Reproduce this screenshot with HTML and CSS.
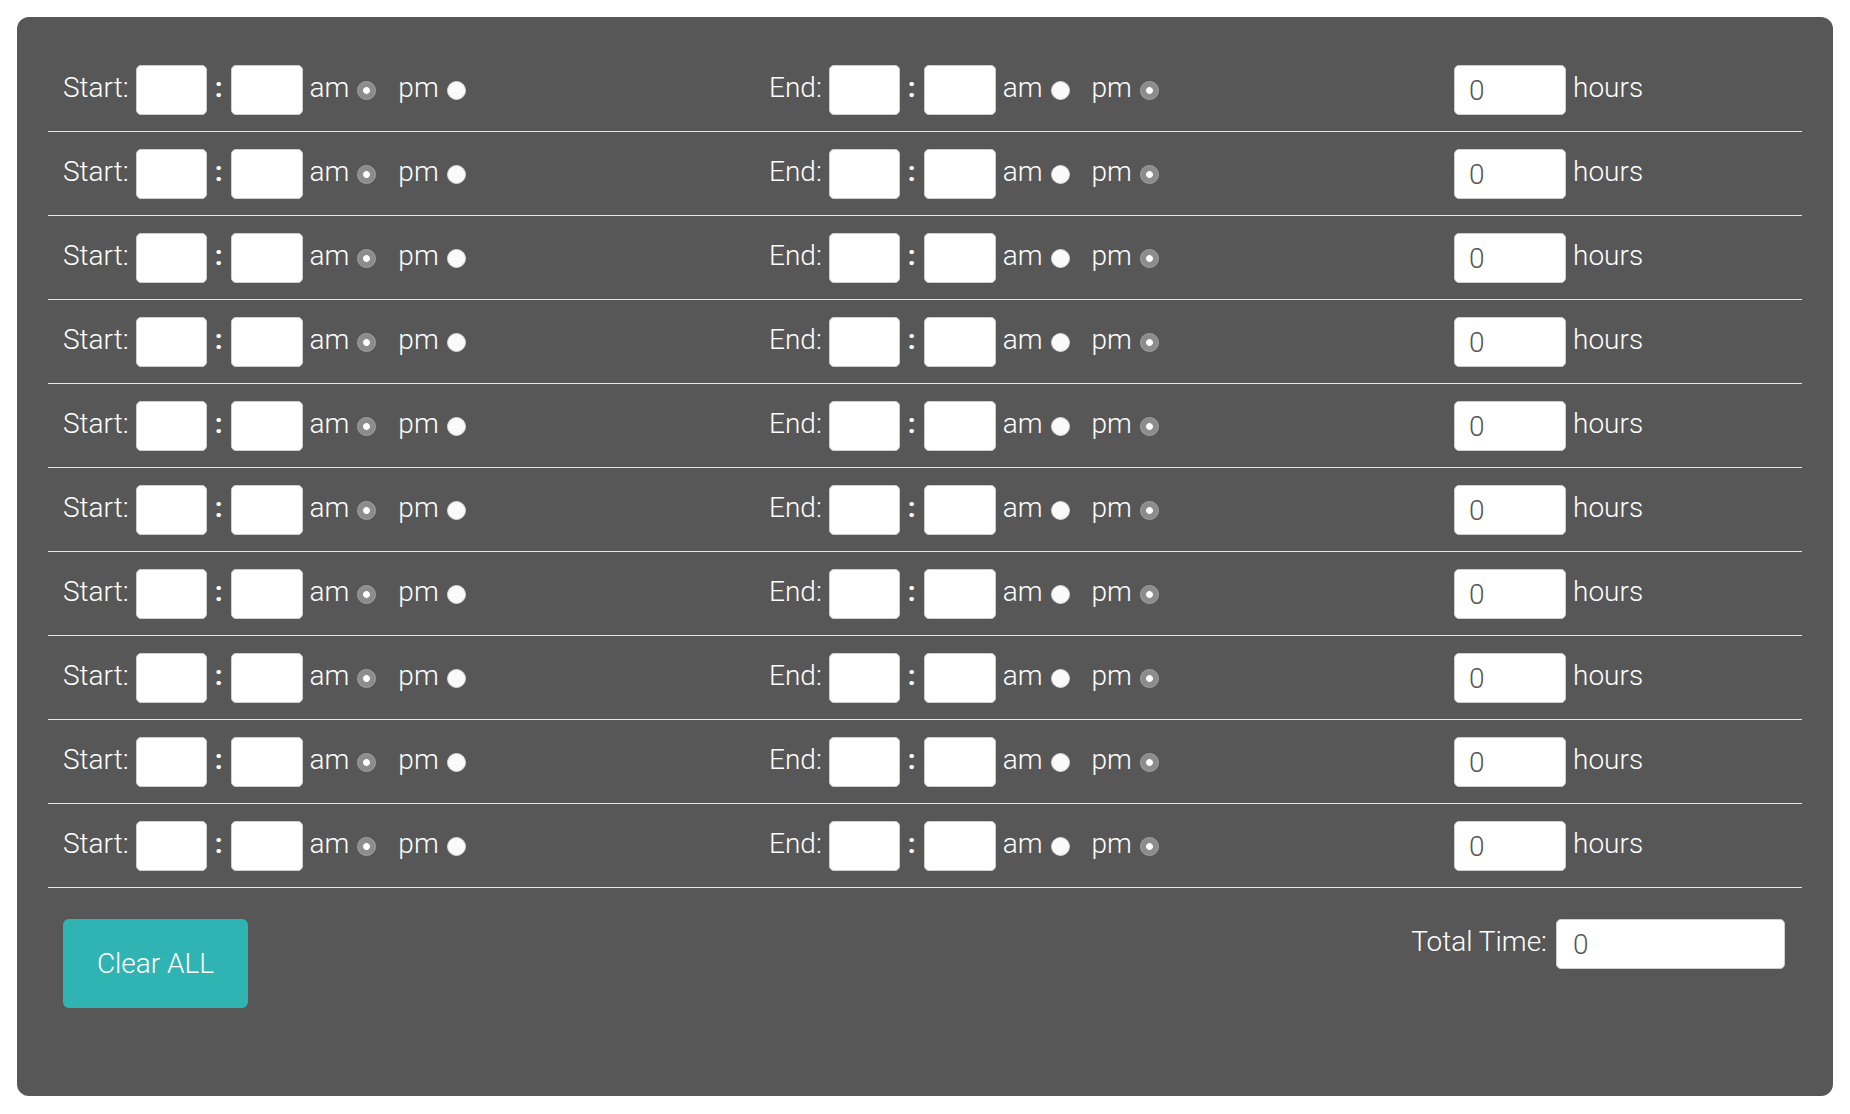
FILE: index.html
```html
<!DOCTYPE html>
<html>
<head>
  <title>Time Card</title>
  <link rel="stylesheet" href="styles.css">
</head>
<body>
  <div class="timecard">
    <div class="row">
      <div class="cell"><span class="lbl">Start:</span><input class="hh" type="text"><span class="colon">:</span><input class="mm" type="text"><span class="lbl">am</span><input type="radio" name="s1" checked><span class="lbl pm">pm</span><input type="radio" name="s1"></div>
      <div class="cell"><span class="lbl">End:</span><input class="hh" type="text"><span class="colon">:</span><input class="mm" type="text"><span class="lbl">am</span><input type="radio" name="e1"><span class="lbl pm">pm</span><input type="radio" name="e1" checked></div>
      <div class="cell"><input class="hours" type="text" value="0"><span class="lbl">hours</span></div>
    </div>
    <div class="row">
      <div class="cell"><span class="lbl">Start:</span><input class="hh" type="text"><span class="colon">:</span><input class="mm" type="text"><span class="lbl">am</span><input type="radio" name="s2" checked><span class="lbl pm">pm</span><input type="radio" name="s2"></div>
      <div class="cell"><span class="lbl">End:</span><input class="hh" type="text"><span class="colon">:</span><input class="mm" type="text"><span class="lbl">am</span><input type="radio" name="e2"><span class="lbl pm">pm</span><input type="radio" name="e2" checked></div>
      <div class="cell"><input class="hours" type="text" value="0"><span class="lbl">hours</span></div>
    </div>
    <div class="row">
      <div class="cell"><span class="lbl">Start:</span><input class="hh" type="text"><span class="colon">:</span><input class="mm" type="text"><span class="lbl">am</span><input type="radio" name="s3" checked><span class="lbl pm">pm</span><input type="radio" name="s3"></div>
      <div class="cell"><span class="lbl">End:</span><input class="hh" type="text"><span class="colon">:</span><input class="mm" type="text"><span class="lbl">am</span><input type="radio" name="e3"><span class="lbl pm">pm</span><input type="radio" name="e3" checked></div>
      <div class="cell"><input class="hours" type="text" value="0"><span class="lbl">hours</span></div>
    </div>
    <div class="row">
      <div class="cell"><span class="lbl">Start:</span><input class="hh" type="text"><span class="colon">:</span><input class="mm" type="text"><span class="lbl">am</span><input type="radio" name="s4" checked><span class="lbl pm">pm</span><input type="radio" name="s4"></div>
      <div class="cell"><span class="lbl">End:</span><input class="hh" type="text"><span class="colon">:</span><input class="mm" type="text"><span class="lbl">am</span><input type="radio" name="e4"><span class="lbl pm">pm</span><input type="radio" name="e4" checked></div>
      <div class="cell"><input class="hours" type="text" value="0"><span class="lbl">hours</span></div>
    </div>
    <div class="row">
      <div class="cell"><span class="lbl">Start:</span><input class="hh" type="text"><span class="colon">:</span><input class="mm" type="text"><span class="lbl">am</span><input type="radio" name="s5" checked><span class="lbl pm">pm</span><input type="radio" name="s5"></div>
      <div class="cell"><span class="lbl">End:</span><input class="hh" type="text"><span class="colon">:</span><input class="mm" type="text"><span class="lbl">am</span><input type="radio" name="e5"><span class="lbl pm">pm</span><input type="radio" name="e5" checked></div>
      <div class="cell"><input class="hours" type="text" value="0"><span class="lbl">hours</span></div>
    </div>
    <div class="row">
      <div class="cell"><span class="lbl">Start:</span><input class="hh" type="text"><span class="colon">:</span><input class="mm" type="text"><span class="lbl">am</span><input type="radio" name="s6" checked><span class="lbl pm">pm</span><input type="radio" name="s6"></div>
      <div class="cell"><span class="lbl">End:</span><input class="hh" type="text"><span class="colon">:</span><input class="mm" type="text"><span class="lbl">am</span><input type="radio" name="e6"><span class="lbl pm">pm</span><input type="radio" name="e6" checked></div>
      <div class="cell"><input class="hours" type="text" value="0"><span class="lbl">hours</span></div>
    </div>
    <div class="row">
      <div class="cell"><span class="lbl">Start:</span><input class="hh" type="text"><span class="colon">:</span><input class="mm" type="text"><span class="lbl">am</span><input type="radio" name="s7" checked><span class="lbl pm">pm</span><input type="radio" name="s7"></div>
      <div class="cell"><span class="lbl">End:</span><input class="hh" type="text"><span class="colon">:</span><input class="mm" type="text"><span class="lbl">am</span><input type="radio" name="e7"><span class="lbl pm">pm</span><input type="radio" name="e7" checked></div>
      <div class="cell"><input class="hours" type="text" value="0"><span class="lbl">hours</span></div>
    </div>
    <div class="row">
      <div class="cell"><span class="lbl">Start:</span><input class="hh" type="text"><span class="colon">:</span><input class="mm" type="text"><span class="lbl">am</span><input type="radio" name="s8" checked><span class="lbl pm">pm</span><input type="radio" name="s8"></div>
      <div class="cell"><span class="lbl">End:</span><input class="hh" type="text"><span class="colon">:</span><input class="mm" type="text"><span class="lbl">am</span><input type="radio" name="e8"><span class="lbl pm">pm</span><input type="radio" name="e8" checked></div>
      <div class="cell"><input class="hours" type="text" value="0"><span class="lbl">hours</span></div>
    </div>
    <div class="row">
      <div class="cell"><span class="lbl">Start:</span><input class="hh" type="text"><span class="colon">:</span><input class="mm" type="text"><span class="lbl">am</span><input type="radio" name="s9" checked><span class="lbl pm">pm</span><input type="radio" name="s9"></div>
      <div class="cell"><span class="lbl">End:</span><input class="hh" type="text"><span class="colon">:</span><input class="mm" type="text"><span class="lbl">am</span><input type="radio" name="e9"><span class="lbl pm">pm</span><input type="radio" name="e9" checked></div>
      <div class="cell"><input class="hours" type="text" value="0"><span class="lbl">hours</span></div>
    </div>
    <div class="row">
      <div class="cell"><span class="lbl">Start:</span><input class="hh" type="text"><span class="colon">:</span><input class="mm" type="text"><span class="lbl">am</span><input type="radio" name="s10" checked><span class="lbl pm">pm</span><input type="radio" name="s10"></div>
      <div class="cell"><span class="lbl">End:</span><input class="hh" type="text"><span class="colon">:</span><input class="mm" type="text"><span class="lbl">am</span><input type="radio" name="e10"><span class="lbl pm">pm</span><input type="radio" name="e10" checked></div>
      <div class="cell"><input class="hours" type="text" value="0"><span class="lbl">hours</span></div>
    </div>

    <div class="footer">
      <button class="clear">Clear ALL</button>
      <div class="cell total-cell"><span class="lbl">Total Time:</span><input class="total" type="text" value="0"></div>
    </div>
  </div>
</body>
</html>
```

FILE: styles.css
```css
body {
  margin: 0;
  padding: 17px 17px 19px;
  background-color: #fff;
  font-family: Roboto, "Liberation Sans", sans-serif;
  font-weight: 300;
  font-size: 28px;
  color: #fff;
}

.timecard {
  background-color: #575757;
  border-radius: 12px;
  padding: 31px 31px 88px;
}

.row {
  display: grid;
  grid-template-columns: 706px 685px 1fr;
  padding: 17px 15px 16px;
  border-bottom: 1px solid #e8e8e8;
}

.cell {
  display: flex;
  align-items: center;
  gap: 7px;
  height: 50px;
}

.lbl {
  padding-bottom: 4px;
  line-height: 1;
}

.lbl.pm {
  margin-left: 15px;
}

.colon {
  font-size: 28px;
  font-weight: 700;
  line-height: 1;
  padding-bottom: 4px;
  margin: 0 1px;
}

.timecard input[type="text"] {
  box-sizing: border-box;
  height: 50px;
  border: 1px solid #cfcfcf;
  border-radius: 5px;
  background-color: #fff;
  font-family: Roboto, "Liberation Sans", sans-serif;
  font-weight: 300;
  font-size: 28px;
  color: #555;
  padding: 0 14px;
  margin: 0;
}

.timecard input.hh {
  width: 71px;
}

.timecard input.mm {
  width: 72px;
}

.timecard input.hours {
  width: 112px;
}

.timecard input.total {
  width: 229px;
  padding-left: 16px;
}

.timecard input[type="radio"] {
  appearance: none;
  -webkit-appearance: none;
  box-sizing: border-box;
  width: 19px;
  height: 19px;
  margin: 0 0 0 1px;
  border-radius: 50%;
  background-color: #fafafa;
  border: 1px solid #d8d8d8;
}

.timecard input[type="radio"]:checked {
  background: radial-gradient(circle, #fff 0 3px, #8c8c8c 3.8px);
  border-color: #a3a3a3;
}

.footer {
  display: flex;
  justify-content: space-between;
  align-items: flex-start;
  padding: 31px 17px 0 15px;
}

.total-cell {
  gap: 9px;
}

.footer .clear {
  width: 185px;
  height: 89px;
  background-color: #2fb3b3;
  color: #fff;
  border: none;
  border-radius: 6px;
  font-family: Roboto, "Liberation Sans", sans-serif;
  font-weight: 300;
  font-size: 28px;
  cursor: pointer;
}
```
